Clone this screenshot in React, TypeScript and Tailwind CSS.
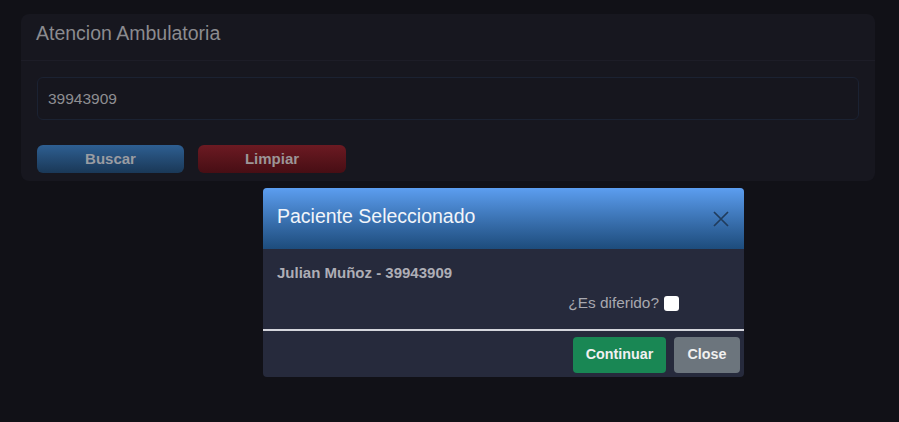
export default function App() {
  return (
    <div
      className="relative h-[422px] w-[899px] overflow-hidden bg-[#111117] pl-[21px] pt-[14px]"
      style={{ fontFamily: '"Liberation Sans", Arial, sans-serif' }}
    >
      {/* search card */}
      <div className="w-[854px] rounded-lg bg-[#17171f]">
        <div className="h-[47px] border-b border-[#1d1d27] pl-[15px] pt-[8px]">
          <h4 className="text-[19.5px] leading-[22px] text-[#8b8b8f]">Atencion Ambulatoria</h4>
        </div>
        <div className="px-4 pb-[8px] pt-4">
          <div className="flex h-[43px] items-center rounded-md border border-[#1b2232] bg-[#16161e] pl-[10px]">
            <span className="text-[15.5px] text-[#8e8e92]">39943909</span>
          </div>
          <div className="mt-[25px] flex gap-[14px]">
            <button className="h-[28px] w-[147px] rounded-md bg-gradient-to-b from-[#2e5f92] to-[#1a3857] text-[15px] font-bold text-[#9a9ca2]">
              Buscar
            </button>
            <button className="h-[28px] w-[148px] rounded-md bg-gradient-to-b from-[#6c1a22] to-[#470e14] text-[15px] font-bold text-[#9c9597]">
              Limpiar
            </button>
          </div>
        </div>
      </div>

      {/* modal */}
      <div className="absolute left-[263px] top-[188px] w-[481px] overflow-hidden rounded-[4px] bg-[#262a3c]">
        <div className="flex h-[61px] items-center justify-between bg-gradient-to-b from-[#5c9ef0] to-[#1d4c7c] pl-[14px] pr-[15px]">
          <span className="-mt-[4px] text-[19.5px] text-[#f2f5fa]">Paciente Seleccionado</span>
          <svg viewBox="0 0 16 16" className="h-4 w-4 text-[#203c5c]" fill="none" stroke="currentColor" strokeWidth={1.7}>
            <path d="M1 1l14 14M15 1L1 15" />
          </svg>
        </div>
        <div className="h-[80px] px-[14px] pt-[15px]">
          <p className="text-[15px] font-bold leading-[18px] text-[#aeaeb6]">Julian Muñoz - 39943909</p>
          <div className="mt-[12px] flex items-center justify-end gap-[5px] pr-[51px]">
            <span className="text-[15.4px] leading-[18px] text-[#a8a8b0]">¿Es diferido?</span>
            <span className="h-[15px] w-[15px] rounded-[3px] bg-white" />
          </div>
        </div>
        <div className="h-[2px] bg-[#d4d5dc]" />
        <div className="flex h-[46px] items-start justify-end gap-[8px] pr-[4px] pt-[6px]">
          <button className="h-[36px] w-[93px] rounded-[4px] bg-[#198754] text-[14.3px] font-bold text-[#f0f0f0]">
            Continuar
          </button>
          <button className="h-[36px] w-[66px] rounded-[4px] bg-[#6c757d] text-[14.3px] font-bold text-[#f0f0f0]">
            Close
          </button>
        </div>
      </div>
    </div>
  );
}
